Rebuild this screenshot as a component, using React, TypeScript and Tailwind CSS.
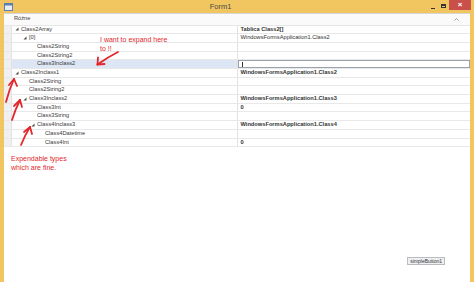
import React from 'react';

interface GridRow {
  name: string;
  depth: number;
  expandable?: boolean;
  value?: string;
  bold?: boolean;
  selected?: boolean;
}

const rows: GridRow[] = [
  { name: 'Class2Array', depth: 0, expandable: true, value: 'Tablica Class2[]', bold: true },
  { name: '[0]', depth: 1, expandable: true, value: 'WindowsFormsApplication1.Class2' },
  { name: 'Class2String', depth: 2 },
  { name: 'Class2String2', depth: 2 },
  { name: 'Class3Inclass2', depth: 2, selected: true },
  { name: 'Class2Inclass1', depth: 0, expandable: true, value: 'WindowsFormsApplication1.Class2', bold: true },
  { name: 'Class2String', depth: 1 },
  { name: 'Class2String2', depth: 1 },
  { name: 'Class3Inclass2', depth: 1, expandable: true, value: 'WindowsFormsApplication1.Class3', bold: true },
  { name: 'Class3Int', depth: 2, value: '0', bold: true },
  { name: 'Class3String', depth: 2 },
  { name: 'Class4Inclass3', depth: 2, expandable: true, value: 'WindowsFormsApplication1.Class4', bold: true },
  { name: 'Class4Datetime', depth: 3 },
  { name: 'Class4Int', depth: 3, value: '0', bold: true },
];

function Expander() {
  return (
    <svg width="4" height="4" viewBox="0 0 4 4" className="shrink-0">
      <path d="M3.5 0.5 L3.5 3.5 L0.5 3.5 Z" fill="#4a4a4a" />
    </svg>
  );
}

function PropertyRow({ row }: { row: GridRow }) {
  const indent = 9 + row.depth * 8;
  return (
    <div className="flex h-[8.7px] border-b border-[#e8e8e8]">
      <div className="w-[8px] bg-[#eff0f2] border-r border-[#e2e2e2]" />
      <div
        className={`w-[225.5px] flex items-center border-r border-[#e2e2e2] ${row.selected ? 'bg-[#dce6f4]' : ''}`}
        style={{ paddingLeft: row.expandable ? indent - 6 : indent }}
      >
        {row.expandable && (
          <span className="mr-[2px] flex items-center">
            <Expander />
          </span>
        )}
        <span className="text-[5.7px] text-[#3a3a3a] whitespace-nowrap leading-none">{row.name}</span>
      </div>
      {row.selected ? (
        <div className="flex-1 flex items-center border border-[#9aa3ad] bg-white pl-[3px]">
          <div className="w-px h-[5px] bg-[#333]" />
        </div>
      ) : (
        <div className="flex-1 flex items-center pl-[3px]">
          <span
            className={`text-[5.7px] text-[#333] whitespace-nowrap leading-none ${row.bold ? 'font-bold' : ''}`}
          >
            {row.value}
          </span>
        </div>
      )}
    </div>
  );
}

export default function App() {
  return (
    <div
      className="relative w-[474px] h-[282px] bg-[#f1c560] flex flex-col overflow-hidden"
      style={{ fontFamily: '"Liberation Sans", Arial, sans-serif' }}
    >
      {/* title bar */}
      <div className="relative h-[13px] flex items-center">
        <svg width="9" height="8" viewBox="0 0 9 8" className="ml-[4px]">
          <rect x="0.5" y="0.5" width="8" height="7" fill="#e8eef6" stroke="#5a7fb0" />
          <rect x="0.5" y="0.5" width="8" height="2" fill="#5a7fb0" />
        </svg>
        <div className="flex-1 text-center text-[7.5px] text-[#4a4a4a] leading-none">Form1</div>
        <div className="flex items-start h-full">
          <div className="w-[10px] h-full flex items-center justify-center">
            <div className="w-[4px] h-[1.5px] bg-[#333] mt-[4px]" />
          </div>
          <div className="w-[10px] h-full flex items-center justify-center">
            <div className="w-[5px] h-[4px] border border-[#333] border-t-2 mb-[2px]" />
          </div>
          <div className="w-[22px] h-[10px] ml-[1px] mr-[3px] bg-[#c9504a] flex items-center justify-center text-white text-[8px] leading-none font-bold">
            ×
          </div>
        </div>
      </div>

      {/* client area */}
      <div className="flex-1 mx-[4px] bg-white flex flex-col">
        <div className="border-t border-[#d6d6d6]">
          <div className="h-[11.6px] flex items-center justify-between pl-[10px] pr-[11px] border-b border-[#e6e6e6] bg-[#fafafa]">
            <span className="text-[5.7px] text-[#444] leading-none">Różne</span>
            <svg width="5" height="3" viewBox="0 0 5 3">
              <path d="M0.5 2.5 L2.5 0.5 L4.5 2.5" fill="none" stroke="#888" strokeWidth="0.8" />
            </svg>
          </div>
          {rows.map((row, i) => (
            <PropertyRow key={i} row={row} />
          ))}
        </div>

        <div className="flex-1 flex flex-col">
          <div className="pl-[7px] pt-[7px] text-[7px] leading-[9px] text-[#e2282d]">
            <div>Expendable types</div>
            <div>which are fine.</div>
          </div>
          <div className="mt-auto self-end mr-[25px] mb-[17px] h-[8px] px-[2px] border border-[#b9bcc0] bg-[#eef0f2] flex items-center">
            <span className="text-[5px] text-[#333] leading-none">simpleButton1</span>
          </div>
        </div>
      </div>

      {/* annotations drawn over the grid */}
      <div className="absolute left-[100px] top-[36px] text-[7px] leading-[8.5px] text-[#e2282d]">
        <div>I want to expand here</div>
        <div>to !!</div>
      </div>
      <svg
        className="absolute left-0 top-0 pointer-events-none"
        width="474"
        height="282"
        viewBox="0 0 474 282"
      >
        <g fill="none" stroke="#e2282d" strokeWidth="1.8" strokeLinecap="round" strokeLinejoin="round">
          <path d="M118 52 Q108 57 97.5 64.5" />
          <path d="M97.5 64.5 L98 57.5" />
          <path d="M97.5 64.5 L104.5 64" />

          <path d="M6 102 Q9 90 14 79" />
          <path d="M14 79 L9 85" />
          <path d="M14 79 L17 86" />

          <path d="M12 120 Q15 110 20 100" />
          <path d="M20 100 L14 106" />
          <path d="M20 100 L22 107" />

          <path d="M21 145 Q25 135 30 127" />
          <path d="M30 127 L24 132" />
          <path d="M30 127 L32 134" />
        </g>
      </svg>
    </div>
  );
}
